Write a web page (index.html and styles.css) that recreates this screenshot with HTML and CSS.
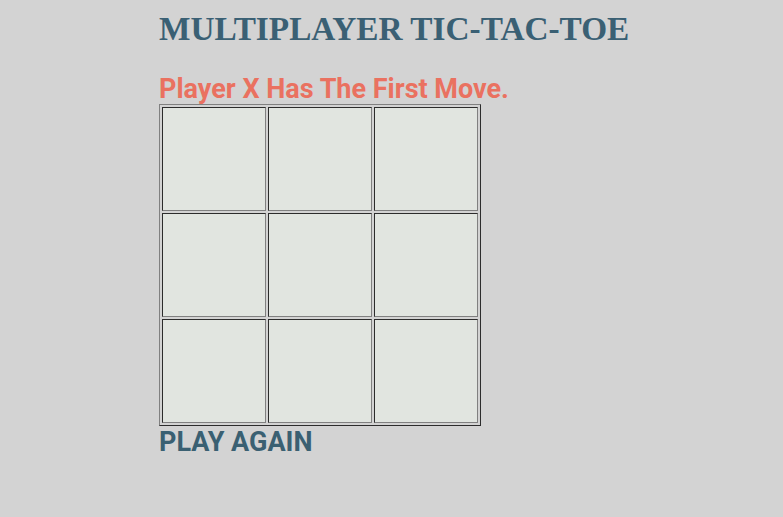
FILE: index.html
```html
<!DOCTYPE html>
<html lang="en">

<head>
    <meta charset="UTF-8">
    <meta name="viewport" content="width=device-width, initial-scale=1.0">
    <title>Tic Tac Toe</title>
    <link rel="stylesheet" href="styles.css">
</head>

<body>
    <div class="game">
        <h1 class="title">MULTIPLAYER TIC-TAC-TOE</h1>
        <p class="status">Player X Has The First Move.</p>
        <table class="board" border="1">
            <tr>
                <td></td>
                <td></td>
                <td></td>
            </tr>
            <tr>
                <td></td>
                <td></td>
                <td></td>
            </tr>
            <tr>
                <td></td>
                <td></td>
                <td></td>
            </tr>
        </table>
        <button class="restart">PLAY AGAIN</button>
    </div>
</body>

</html>
```

FILE: styles.css
```css
html,
body {
    margin: 0;
    padding: 0;
    background-color: #d3d3d3;
}

.game {
    padding: 10px 0 0 159px;
}

.title {
    margin: 0;
    font-family: "Liberation Serif", serif;
    font-size: 33.3px;
    font-weight: bold;
    color: #3a6074;
}

.status {
    margin: 28px 0 0 0;
    font-family: Roboto, sans-serif;
    font-size: 27px;
    font-weight: bold;
    line-height: 1;
    color: #ea7160;
}

.board {
    margin-top: 1px;
    border-spacing: 2px;
}

.board td {
    width: 102px;
    height: 102px;
    padding: 0;
    background-color: #e1e5e0;
}

.restart {
    display: block;
    margin: 0;
    padding: 0;
    border: none;
    background: none;
    font-family: Roboto, sans-serif;
    font-size: 27px;
    font-weight: bold;
    color: #3a6072;
}
```
